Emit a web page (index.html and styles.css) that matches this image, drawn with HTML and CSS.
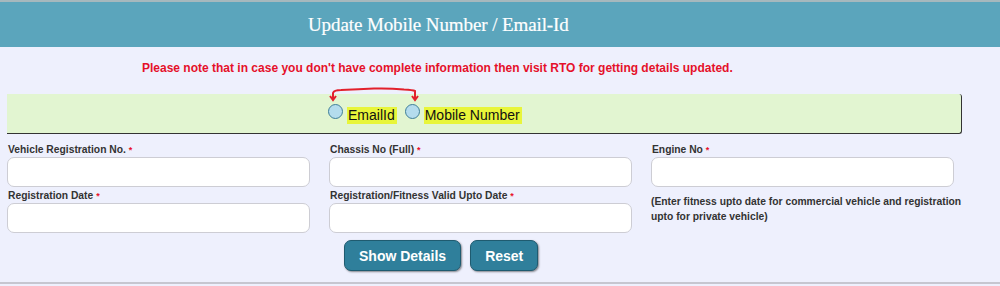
FILE: index.html
```html
<!DOCTYPE html>
<html>
<head>
<meta charset="utf-8">
<link rel="stylesheet" href="styles.css">
</head>
<body>
<div class="page">
  <div class="header"><h1 class="title">Update Mobile Number / Email-Id</h1></div>
  <p class="notice">Please note that in case you don't have complete information then visit RTO for getting details updated.</p>
  <div class="choice">
    <svg class="arrow" width="100" height="16" viewBox="0 0 100 16">
      <path d="M4 13 L4 6 Q5 3 12 3 Q30 2 45 1.5 Q60 1 75 2.5 Q84 3 86 4 L86 13" fill="none" stroke="#e2202c" stroke-width="2"/>
      <path d="M1 9 L4 13 L7 9" fill="none" stroke="#e2202c" stroke-width="2"/>
      <path d="M83 9 L86 13 L89 9" fill="none" stroke="#e2202c" stroke-width="2"/>
    </svg>
    <label class="opt"><span class="radio"></span><span class="hl">EmailId</span></label>
    <label class="opt"><span class="radio"></span><span class="hl">Mobile Number</span></label>
  </div>
  <div class="grid">
    <div class="field"><div class="lbl">Vehicle Registration No. <span class="req">*</span></div><div class="input"></div></div>
    <div class="field"><div class="lbl">Chassis No (Full) <span class="req">*</span></div><div class="input"></div></div>
    <div class="field"><div class="lbl">Engine No <span class="req">*</span></div><div class="input"></div></div>
    <div class="field"><div class="lbl">Registration Date <span class="req">*</span></div><div class="input"></div></div>
    <div class="field"><div class="lbl">Registration/Fitness Valid Upto Date <span class="req">*</span></div><div class="input"></div></div>
    <div class="field"><div class="note">(Enter fitness upto date for commercial vehicle and registration upto for private vehicle)</div></div>
  </div>
  <div class="buttons">
    <button class="btn">Show Details</button>
    <button class="btn">Reset</button>
  </div>
</div>
</body>
</html>
```
FILE: styles.css
```css
html, body { margin: 0; padding: 0; }
body {
  background: #eef0fd;
  font-family: "Liberation Sans", Arial, sans-serif;
  width: 1000px;
  height: 286px;
  overflow: hidden;
}
.page {
  height: 282px;
  border-bottom: 2px solid #c6c6d0;
}
.header {
  background: #5ba5bc;
  border-top: 2px solid #a6b8bd;
  height: 45px;
  display: flex;
  align-items: center;
}
.title {
  margin: 0 0 0 308px;
  font-family: "Liberation Serif", "Times New Roman", serif;
  font-weight: normal;
  font-size: 19px;
  color: #fff;
  letter-spacing: -0.1px;
  -webkit-text-stroke: 0.2px #fff;
}
.notice {
  margin: 0;
  padding: 14px 0 0 142px;
  height: 32px;
  box-sizing: border-box;
  color: #e5102a;
  font-weight: bold;
  font-size: 12px;
}
.choice {
  position: relative;
  margin: 0 0 0 7px;
  width: 955px;
  height: 40px;
  box-sizing: border-box;
  background: #e2f5d1;
  border-right: 1px solid #333;
  border-bottom: 1px solid #333;
  border-bottom-right-radius: 3px;
  border-top-right-radius: 3px;
  display: flex;
  align-items: center;
  padding: 0 0 0 321px;
  gap: 8px;
  margin-top: 15px;
}
.arrow {
  position: absolute;
  left: 322px;
  top: -7px;
}
.opt {
  display: flex;
  align-items: center;
  gap: 4px;
  font-size: 14px;
  color: #111;
}
.radio {
  width: 13px;
  height: 13px;
  border: 1px solid #3f7e98;
  border-radius: 50%;
  background: #b4dced;
  margin-top: -4px;
}
.hl {
  background: #e8f53a;
  padding: 1px 2px 1px 1px;
  line-height: 15px;
  margin-top: 4px;
}
.grid {
  display: grid;
  grid-template-columns: 303px 303px 303px;
  column-gap: 19px;
  padding: 9px 0 0 7px;
}
.field { display: flex; flex-direction: column; }
.lbl {
  font-size: 10.3px;
  font-weight: bold;
  color: #333;
  height: 14px;
  line-height: 14px;
  padding-left: 1px;
}
.req { color: #e8102a; font-size: 9px; }
.input {
  height: 30px;
  box-sizing: border-box;
  background: #fff;
  border: 1px solid #cdcdd4;
  border-radius: 7px;
  margin-bottom: 2px;
}
.note {
  width: 330px;
  font-size: 10.3px;
  font-weight: bold;
  color: #333;
  line-height: 15px;
  padding-top: 5px;
}
.buttons {
  display: flex;
  gap: 9px;
  padding: 5px 0 0 344px;
}
.btn {
  height: 31px;
  box-sizing: border-box;
  background: #2f7f9b;
  border: 1px solid #1f5b70;
  border-radius: 7px;
  color: #fff;
  font-family: "Liberation Sans", Arial, sans-serif;
  font-weight: bold;
  font-size: 14px;
  padding: 0 14px;
  box-shadow: 1px 1px 2px rgba(0,0,0,0.45);
}
```
